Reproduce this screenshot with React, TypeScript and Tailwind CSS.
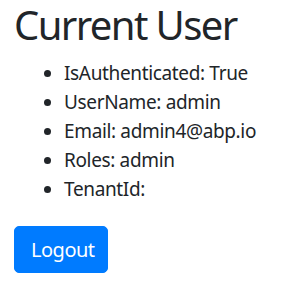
export default function App() {
  const items = [
    "IsAuthenticated: True",
    "UserName: admin",
    "Email: admin4@abp.io",
    "Roles: admin",
    "TenantId:",
  ];
  return (
    <div
      className="bg-white text-[#212529] px-[14px] pt-[1px] h-[286px] w-[285px] overflow-hidden"
      style={{ fontFamily: '"Noto Sans", "Open Sans", sans-serif' }}
    >
      <h1 className="text-[40px] leading-[48px] font-normal m-0 tracking-[-1.6px] whitespace-nowrap">Current User</h1>
      <ul className="list-disc pl-[50px] mt-[10px] mb-[22px] text-[19px] leading-[29px] tracking-[-0.35px]">
        {items.map((t) => (
          <li key={t}>{t}</li>
        ))}
      </ul>
      <button className="bg-[#007bff] text-white text-[20px] leading-[30px] tracking-[-0.5px] px-[16px] py-[8px] rounded-[5px] border border-[#007bff] h-[47px] w-[94px]">
        Logout
      </button>
    </div>
  );
}
